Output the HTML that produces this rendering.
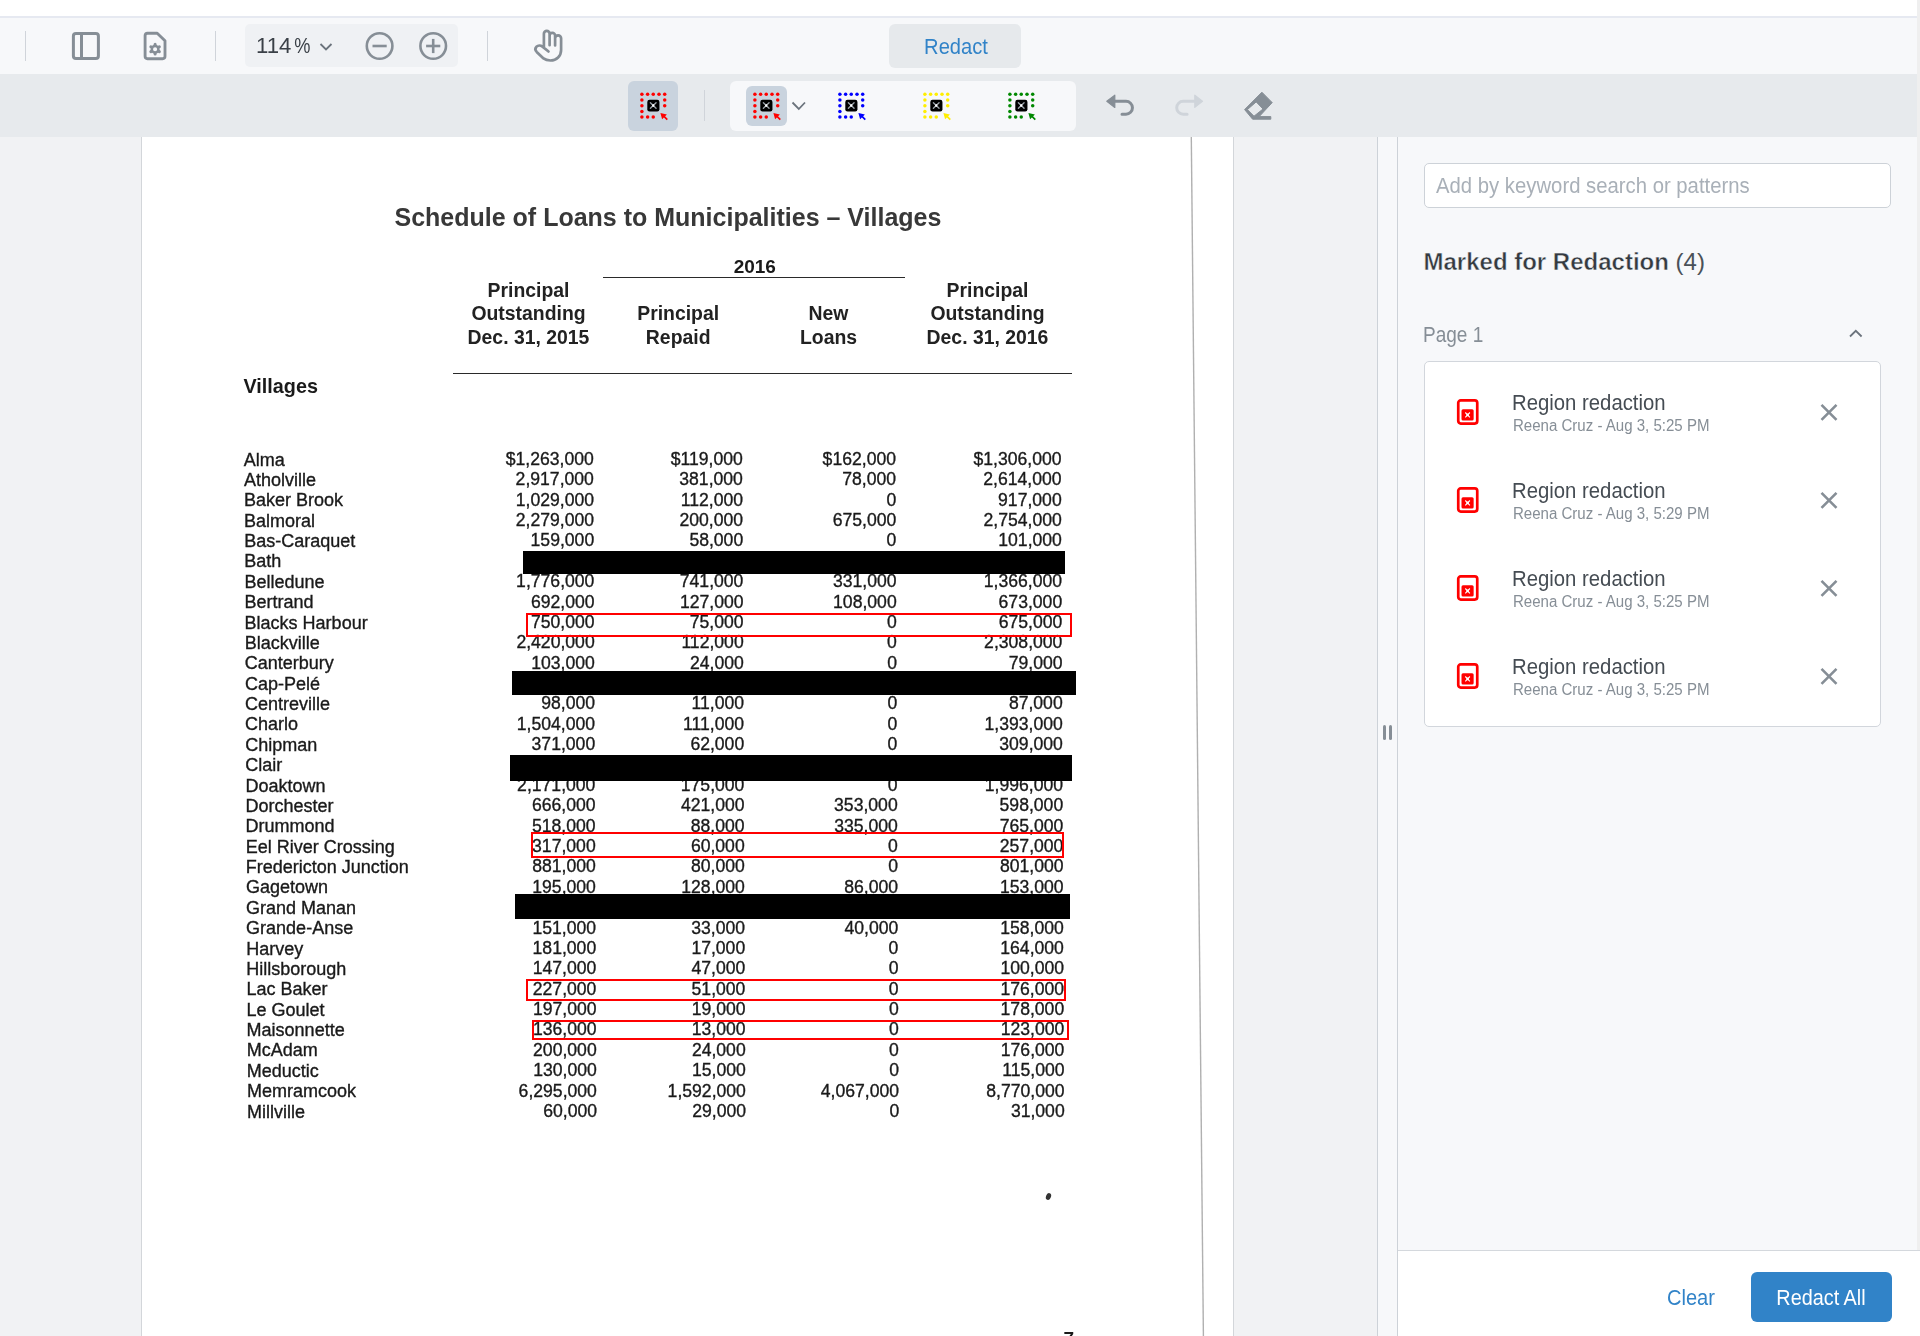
<!DOCTYPE html>
<html><head><meta charset="utf-8">
<style>
html,body{margin:0;padding:0;}
body{width:1920px;height:1336px;overflow:hidden;position:relative;background:#fff;font-family:"Liberation Sans",sans-serif;}
.abs{position:absolute;}
.t{position:absolute;white-space:pre;font-family:"Liberation Sans",sans-serif;color:#1a1a1a;}
.tr{-webkit-text-stroke:0.35px #1a1a1a;}
.ln{position:absolute;background:#2a2a2a;}
.bar{position:absolute;background:#000;}
.rr{position:absolute;box-sizing:border-box;border:2px solid #ff0000;}
#topline{left:0;top:16px;width:1917px;height:2px;background:#e6e9f1;}
#tb1{left:0;top:18px;width:1917px;height:56px;background:#f7f8fa;}
#tb2{left:0;top:74px;width:1917px;height:63px;background:#e7eaed;}
#scroll{left:1917px;top:0;width:3px;height:1336px;background:#efefef;}
#docbg{left:0;top:137px;width:1377px;height:1199px;background:#f1f2f4;}
#page{left:141px;top:137px;width:1093px;height:1199px;background:#fff;box-sizing:border-box;border-left:1px solid #d3d6da;border-right:1px solid #d3d6da;overflow:hidden;}
#split{left:1377px;top:137px;width:21px;height:1199px;background:#f7f8fa;box-sizing:border-box;border-left:1px solid #cdd2d8;border-right:1px solid #cdd2d8;}
#side{left:1398px;top:137px;width:1519px;height:1199px;background:#f7f8fa;}
.div{position:absolute;width:1px;background:#d0d4da;}
.st{position:absolute;white-space:pre;font-family:"Liberation Sans",sans-serif;}
</style></head><body>
<div class="abs" id="topline"></div>
<div class="abs" id="tb1"></div>
<div class="abs" id="tb2"></div>
<div class="abs" id="docbg"></div>
<div class="abs" id="page"></div>
<div class="abs" id="split"></div>
<div class="abs" id="side"></div>
<div class="abs" id="scroll"></div>

<!-- document content -->
<div class="abs" style="left:0;top:0;width:1920px;height:1336px;overflow:hidden;clip-path:inset(137px 686px 0 142px);filter:blur(0.35px);">
<div class="t" style="left:394.50px;top:204.54px;font-size:25px;line-height:25px;font-weight:700;color:#383838;">Schedule of Loans to Municipalities – Villages</div>
<div class="t" style="left:694.80px;width:120px;text-align:center;top:256.92px;font-size:19px;line-height:19px;font-weight:700;color:#1a1a1a;">2016</div>
<div class="t" style="left:428.50px;width:200px;text-align:center;top:281.08px;font-size:19.4px;line-height:19.4px;font-weight:700;color:#222;">Principal</div>
<div class="t" style="left:428.50px;width:200px;text-align:center;top:304.38px;font-size:19.4px;line-height:19.4px;font-weight:700;color:#222;">Outstanding</div>
<div class="t" style="left:428.50px;width:200px;text-align:center;top:328.08px;font-size:19.4px;line-height:19.4px;font-weight:700;color:#222;">Dec. 31, 2015</div>
<div class="t" style="left:578.20px;width:200px;text-align:center;top:304.38px;font-size:19.4px;line-height:19.4px;font-weight:700;color:#222;">Principal</div>
<div class="t" style="left:578.20px;width:200px;text-align:center;top:328.08px;font-size:19.4px;line-height:19.4px;font-weight:700;color:#222;">Repaid</div>
<div class="t" style="left:728.50px;width:200px;text-align:center;top:304.38px;font-size:19.4px;line-height:19.4px;font-weight:700;color:#222;">New</div>
<div class="t" style="left:728.50px;width:200px;text-align:center;top:328.08px;font-size:19.4px;line-height:19.4px;font-weight:700;color:#222;">Loans</div>
<div class="t" style="left:887.50px;width:200px;text-align:center;top:281.08px;font-size:19.4px;line-height:19.4px;font-weight:700;color:#222;">Principal</div>
<div class="t" style="left:887.50px;width:200px;text-align:center;top:304.38px;font-size:19.4px;line-height:19.4px;font-weight:700;color:#222;">Outstanding</div>
<div class="t" style="left:887.50px;width:200px;text-align:center;top:328.08px;font-size:19.4px;line-height:19.4px;font-weight:700;color:#222;">Dec. 31, 2016</div>
<div class="t" style="left:243.50px;top:376.74px;font-size:19.8px;line-height:19.8px;font-weight:700;color:#1a1a1a;">Villages</div>
<div class="ln" style="left:603px;top:276.5px;width:302px;height:1.6px"></div>
<div class="ln" style="left:452.5px;top:372.7px;width:619px;height:1.6px"></div>
<div class="t tr" style="left:243.80px;top:450.56px;font-size:18px;line-height:18px;">Alma</div>
<div class="t tr" style="left:453.80px;width:140px;text-align:right;top:450.90px;font-size:17.6px;line-height:17.6px;">$1,263,000</div>
<div class="t tr" style="left:602.80px;width:140px;text-align:right;top:450.90px;font-size:17.6px;line-height:17.6px;">$119,000</div>
<div class="t tr" style="left:756.00px;width:140px;text-align:right;top:450.90px;font-size:17.6px;line-height:17.6px;">$162,000</div>
<div class="t tr" style="left:921.50px;width:140px;text-align:right;top:450.90px;font-size:17.6px;line-height:17.6px;">$1,306,000</div>
<div class="t tr" style="left:243.90px;top:470.94px;font-size:18px;line-height:18px;">Atholville</div>
<div class="t tr" style="left:453.90px;width:140px;text-align:right;top:471.28px;font-size:17.6px;line-height:17.6px;">2,917,000</div>
<div class="t tr" style="left:602.90px;width:140px;text-align:right;top:471.28px;font-size:17.6px;line-height:17.6px;">381,000</div>
<div class="t tr" style="left:756.10px;width:140px;text-align:right;top:471.28px;font-size:17.6px;line-height:17.6px;">78,000</div>
<div class="t tr" style="left:921.60px;width:140px;text-align:right;top:471.28px;font-size:17.6px;line-height:17.6px;">2,614,000</div>
<div class="t tr" style="left:244.00px;top:491.31px;font-size:18px;line-height:18px;">Baker Brook</div>
<div class="t tr" style="left:454.00px;width:140px;text-align:right;top:491.65px;font-size:17.6px;line-height:17.6px;">1,029,000</div>
<div class="t tr" style="left:603.00px;width:140px;text-align:right;top:491.65px;font-size:17.6px;line-height:17.6px;">112,000</div>
<div class="t tr" style="left:756.20px;width:140px;text-align:right;top:491.65px;font-size:17.6px;line-height:17.6px;">0</div>
<div class="t tr" style="left:921.70px;width:140px;text-align:right;top:491.65px;font-size:17.6px;line-height:17.6px;">917,000</div>
<div class="t tr" style="left:244.10px;top:511.69px;font-size:18px;line-height:18px;">Balmoral</div>
<div class="t tr" style="left:454.10px;width:140px;text-align:right;top:512.03px;font-size:17.6px;line-height:17.6px;">2,279,000</div>
<div class="t tr" style="left:603.10px;width:140px;text-align:right;top:512.03px;font-size:17.6px;line-height:17.6px;">200,000</div>
<div class="t tr" style="left:756.30px;width:140px;text-align:right;top:512.03px;font-size:17.6px;line-height:17.6px;">675,000</div>
<div class="t tr" style="left:921.80px;width:140px;text-align:right;top:512.03px;font-size:17.6px;line-height:17.6px;">2,754,000</div>
<div class="t tr" style="left:244.20px;top:532.06px;font-size:18px;line-height:18px;">Bas-Caraquet</div>
<div class="t tr" style="left:454.20px;width:140px;text-align:right;top:532.40px;font-size:17.6px;line-height:17.6px;">159,000</div>
<div class="t tr" style="left:603.20px;width:140px;text-align:right;top:532.40px;font-size:17.6px;line-height:17.6px;">58,000</div>
<div class="t tr" style="left:756.40px;width:140px;text-align:right;top:532.40px;font-size:17.6px;line-height:17.6px;">0</div>
<div class="t tr" style="left:921.90px;width:140px;text-align:right;top:532.40px;font-size:17.6px;line-height:17.6px;">101,000</div>
<div class="t tr" style="left:244.30px;top:552.44px;font-size:18px;line-height:18px;">Bath</div>
<div class="t tr" style="left:244.40px;top:572.81px;font-size:18px;line-height:18px;">Belledune</div>
<div class="t tr" style="left:454.40px;width:140px;text-align:right;top:573.15px;font-size:17.6px;line-height:17.6px;">1,776,000</div>
<div class="t tr" style="left:603.40px;width:140px;text-align:right;top:573.15px;font-size:17.6px;line-height:17.6px;">741,000</div>
<div class="t tr" style="left:756.60px;width:140px;text-align:right;top:573.15px;font-size:17.6px;line-height:17.6px;">331,000</div>
<div class="t tr" style="left:922.10px;width:140px;text-align:right;top:573.15px;font-size:17.6px;line-height:17.6px;">1,366,000</div>
<div class="t tr" style="left:244.50px;top:593.19px;font-size:18px;line-height:18px;">Bertrand</div>
<div class="t tr" style="left:454.50px;width:140px;text-align:right;top:593.53px;font-size:17.6px;line-height:17.6px;">692,000</div>
<div class="t tr" style="left:603.50px;width:140px;text-align:right;top:593.53px;font-size:17.6px;line-height:17.6px;">127,000</div>
<div class="t tr" style="left:756.70px;width:140px;text-align:right;top:593.53px;font-size:17.6px;line-height:17.6px;">108,000</div>
<div class="t tr" style="left:922.20px;width:140px;text-align:right;top:593.53px;font-size:17.6px;line-height:17.6px;">673,000</div>
<div class="t tr" style="left:244.60px;top:613.56px;font-size:18px;line-height:18px;">Blacks Harbour</div>
<div class="t tr" style="left:454.60px;width:140px;text-align:right;top:613.90px;font-size:17.6px;line-height:17.6px;">750,000</div>
<div class="t tr" style="left:603.60px;width:140px;text-align:right;top:613.90px;font-size:17.6px;line-height:17.6px;">75,000</div>
<div class="t tr" style="left:756.80px;width:140px;text-align:right;top:613.90px;font-size:17.6px;line-height:17.6px;">0</div>
<div class="t tr" style="left:922.30px;width:140px;text-align:right;top:613.90px;font-size:17.6px;line-height:17.6px;">675,000</div>
<div class="t tr" style="left:244.70px;top:633.94px;font-size:18px;line-height:18px;">Blackville</div>
<div class="t tr" style="left:454.70px;width:140px;text-align:right;top:634.28px;font-size:17.6px;line-height:17.6px;">2,420,000</div>
<div class="t tr" style="left:603.70px;width:140px;text-align:right;top:634.28px;font-size:17.6px;line-height:17.6px;">112,000</div>
<div class="t tr" style="left:756.90px;width:140px;text-align:right;top:634.28px;font-size:17.6px;line-height:17.6px;">0</div>
<div class="t tr" style="left:922.40px;width:140px;text-align:right;top:634.28px;font-size:17.6px;line-height:17.6px;">2,308,000</div>
<div class="t tr" style="left:244.80px;top:654.31px;font-size:18px;line-height:18px;">Canterbury</div>
<div class="t tr" style="left:454.80px;width:140px;text-align:right;top:654.65px;font-size:17.6px;line-height:17.6px;">103,000</div>
<div class="t tr" style="left:603.80px;width:140px;text-align:right;top:654.65px;font-size:17.6px;line-height:17.6px;">24,000</div>
<div class="t tr" style="left:757.00px;width:140px;text-align:right;top:654.65px;font-size:17.6px;line-height:17.6px;">0</div>
<div class="t tr" style="left:922.50px;width:140px;text-align:right;top:654.65px;font-size:17.6px;line-height:17.6px;">79,000</div>
<div class="t tr" style="left:244.90px;top:674.69px;font-size:18px;line-height:18px;">Cap-Pelé</div>
<div class="t tr" style="left:245.00px;top:695.06px;font-size:18px;line-height:18px;">Centreville</div>
<div class="t tr" style="left:455.00px;width:140px;text-align:right;top:695.40px;font-size:17.6px;line-height:17.6px;">98,000</div>
<div class="t tr" style="left:604.00px;width:140px;text-align:right;top:695.40px;font-size:17.6px;line-height:17.6px;">11,000</div>
<div class="t tr" style="left:757.20px;width:140px;text-align:right;top:695.40px;font-size:17.6px;line-height:17.6px;">0</div>
<div class="t tr" style="left:922.70px;width:140px;text-align:right;top:695.40px;font-size:17.6px;line-height:17.6px;">87,000</div>
<div class="t tr" style="left:245.10px;top:715.44px;font-size:18px;line-height:18px;">Charlo</div>
<div class="t tr" style="left:455.10px;width:140px;text-align:right;top:715.78px;font-size:17.6px;line-height:17.6px;">1,504,000</div>
<div class="t tr" style="left:604.10px;width:140px;text-align:right;top:715.78px;font-size:17.6px;line-height:17.6px;">111,000</div>
<div class="t tr" style="left:757.30px;width:140px;text-align:right;top:715.78px;font-size:17.6px;line-height:17.6px;">0</div>
<div class="t tr" style="left:922.80px;width:140px;text-align:right;top:715.78px;font-size:17.6px;line-height:17.6px;">1,393,000</div>
<div class="t tr" style="left:245.20px;top:735.81px;font-size:18px;line-height:18px;">Chipman</div>
<div class="t tr" style="left:455.20px;width:140px;text-align:right;top:736.15px;font-size:17.6px;line-height:17.6px;">371,000</div>
<div class="t tr" style="left:604.20px;width:140px;text-align:right;top:736.15px;font-size:17.6px;line-height:17.6px;">62,000</div>
<div class="t tr" style="left:757.40px;width:140px;text-align:right;top:736.15px;font-size:17.6px;line-height:17.6px;">0</div>
<div class="t tr" style="left:922.90px;width:140px;text-align:right;top:736.15px;font-size:17.6px;line-height:17.6px;">309,000</div>
<div class="t tr" style="left:245.30px;top:756.19px;font-size:18px;line-height:18px;">Clair</div>
<div class="t tr" style="left:245.40px;top:776.56px;font-size:18px;line-height:18px;">Doaktown</div>
<div class="t tr" style="left:455.40px;width:140px;text-align:right;top:776.90px;font-size:17.6px;line-height:17.6px;">2,171,000</div>
<div class="t tr" style="left:604.40px;width:140px;text-align:right;top:776.90px;font-size:17.6px;line-height:17.6px;">175,000</div>
<div class="t tr" style="left:757.60px;width:140px;text-align:right;top:776.90px;font-size:17.6px;line-height:17.6px;">0</div>
<div class="t tr" style="left:923.10px;width:140px;text-align:right;top:776.90px;font-size:17.6px;line-height:17.6px;">1,996,000</div>
<div class="t tr" style="left:245.50px;top:796.94px;font-size:18px;line-height:18px;">Dorchester</div>
<div class="t tr" style="left:455.50px;width:140px;text-align:right;top:797.28px;font-size:17.6px;line-height:17.6px;">666,000</div>
<div class="t tr" style="left:604.50px;width:140px;text-align:right;top:797.28px;font-size:17.6px;line-height:17.6px;">421,000</div>
<div class="t tr" style="left:757.70px;width:140px;text-align:right;top:797.28px;font-size:17.6px;line-height:17.6px;">353,000</div>
<div class="t tr" style="left:923.20px;width:140px;text-align:right;top:797.28px;font-size:17.6px;line-height:17.6px;">598,000</div>
<div class="t tr" style="left:245.60px;top:817.31px;font-size:18px;line-height:18px;">Drummond</div>
<div class="t tr" style="left:455.60px;width:140px;text-align:right;top:817.65px;font-size:17.6px;line-height:17.6px;">518,000</div>
<div class="t tr" style="left:604.60px;width:140px;text-align:right;top:817.65px;font-size:17.6px;line-height:17.6px;">88,000</div>
<div class="t tr" style="left:757.80px;width:140px;text-align:right;top:817.65px;font-size:17.6px;line-height:17.6px;">335,000</div>
<div class="t tr" style="left:923.30px;width:140px;text-align:right;top:817.65px;font-size:17.6px;line-height:17.6px;">765,000</div>
<div class="t tr" style="left:245.70px;top:837.69px;font-size:18px;line-height:18px;">Eel River Crossing</div>
<div class="t tr" style="left:455.70px;width:140px;text-align:right;top:838.03px;font-size:17.6px;line-height:17.6px;">317,000</div>
<div class="t tr" style="left:604.70px;width:140px;text-align:right;top:838.03px;font-size:17.6px;line-height:17.6px;">60,000</div>
<div class="t tr" style="left:757.90px;width:140px;text-align:right;top:838.03px;font-size:17.6px;line-height:17.6px;">0</div>
<div class="t tr" style="left:923.40px;width:140px;text-align:right;top:838.03px;font-size:17.6px;line-height:17.6px;">257,000</div>
<div class="t tr" style="left:245.80px;top:858.06px;font-size:18px;line-height:18px;">Fredericton Junction</div>
<div class="t tr" style="left:455.80px;width:140px;text-align:right;top:858.40px;font-size:17.6px;line-height:17.6px;">881,000</div>
<div class="t tr" style="left:604.80px;width:140px;text-align:right;top:858.40px;font-size:17.6px;line-height:17.6px;">80,000</div>
<div class="t tr" style="left:758.00px;width:140px;text-align:right;top:858.40px;font-size:17.6px;line-height:17.6px;">0</div>
<div class="t tr" style="left:923.50px;width:140px;text-align:right;top:858.40px;font-size:17.6px;line-height:17.6px;">801,000</div>
<div class="t tr" style="left:245.90px;top:878.44px;font-size:18px;line-height:18px;">Gagetown</div>
<div class="t tr" style="left:455.90px;width:140px;text-align:right;top:878.78px;font-size:17.6px;line-height:17.6px;">195,000</div>
<div class="t tr" style="left:604.90px;width:140px;text-align:right;top:878.78px;font-size:17.6px;line-height:17.6px;">128,000</div>
<div class="t tr" style="left:758.10px;width:140px;text-align:right;top:878.78px;font-size:17.6px;line-height:17.6px;">86,000</div>
<div class="t tr" style="left:923.60px;width:140px;text-align:right;top:878.78px;font-size:17.6px;line-height:17.6px;">153,000</div>
<div class="t tr" style="left:246.00px;top:898.81px;font-size:18px;line-height:18px;">Grand Manan</div>
<div class="t tr" style="left:246.10px;top:919.19px;font-size:18px;line-height:18px;">Grande-Anse</div>
<div class="t tr" style="left:456.10px;width:140px;text-align:right;top:919.53px;font-size:17.6px;line-height:17.6px;">151,000</div>
<div class="t tr" style="left:605.10px;width:140px;text-align:right;top:919.53px;font-size:17.6px;line-height:17.6px;">33,000</div>
<div class="t tr" style="left:758.30px;width:140px;text-align:right;top:919.53px;font-size:17.6px;line-height:17.6px;">40,000</div>
<div class="t tr" style="left:923.80px;width:140px;text-align:right;top:919.53px;font-size:17.6px;line-height:17.6px;">158,000</div>
<div class="t tr" style="left:246.20px;top:939.56px;font-size:18px;line-height:18px;">Harvey</div>
<div class="t tr" style="left:456.20px;width:140px;text-align:right;top:939.90px;font-size:17.6px;line-height:17.6px;">181,000</div>
<div class="t tr" style="left:605.20px;width:140px;text-align:right;top:939.90px;font-size:17.6px;line-height:17.6px;">17,000</div>
<div class="t tr" style="left:758.40px;width:140px;text-align:right;top:939.90px;font-size:17.6px;line-height:17.6px;">0</div>
<div class="t tr" style="left:923.90px;width:140px;text-align:right;top:939.90px;font-size:17.6px;line-height:17.6px;">164,000</div>
<div class="t tr" style="left:246.30px;top:959.94px;font-size:18px;line-height:18px;">Hillsborough</div>
<div class="t tr" style="left:456.30px;width:140px;text-align:right;top:960.28px;font-size:17.6px;line-height:17.6px;">147,000</div>
<div class="t tr" style="left:605.30px;width:140px;text-align:right;top:960.28px;font-size:17.6px;line-height:17.6px;">47,000</div>
<div class="t tr" style="left:758.50px;width:140px;text-align:right;top:960.28px;font-size:17.6px;line-height:17.6px;">0</div>
<div class="t tr" style="left:924.00px;width:140px;text-align:right;top:960.28px;font-size:17.6px;line-height:17.6px;">100,000</div>
<div class="t tr" style="left:246.40px;top:980.31px;font-size:18px;line-height:18px;">Lac Baker</div>
<div class="t tr" style="left:456.40px;width:140px;text-align:right;top:980.65px;font-size:17.6px;line-height:17.6px;">227,000</div>
<div class="t tr" style="left:605.40px;width:140px;text-align:right;top:980.65px;font-size:17.6px;line-height:17.6px;">51,000</div>
<div class="t tr" style="left:758.60px;width:140px;text-align:right;top:980.65px;font-size:17.6px;line-height:17.6px;">0</div>
<div class="t tr" style="left:924.10px;width:140px;text-align:right;top:980.65px;font-size:17.6px;line-height:17.6px;">176,000</div>
<div class="t tr" style="left:246.50px;top:1000.69px;font-size:18px;line-height:18px;">Le Goulet</div>
<div class="t tr" style="left:456.50px;width:140px;text-align:right;top:1001.03px;font-size:17.6px;line-height:17.6px;">197,000</div>
<div class="t tr" style="left:605.50px;width:140px;text-align:right;top:1001.03px;font-size:17.6px;line-height:17.6px;">19,000</div>
<div class="t tr" style="left:758.70px;width:140px;text-align:right;top:1001.03px;font-size:17.6px;line-height:17.6px;">0</div>
<div class="t tr" style="left:924.20px;width:140px;text-align:right;top:1001.03px;font-size:17.6px;line-height:17.6px;">178,000</div>
<div class="t tr" style="left:246.60px;top:1021.06px;font-size:18px;line-height:18px;">Maisonnette</div>
<div class="t tr" style="left:456.60px;width:140px;text-align:right;top:1021.40px;font-size:17.6px;line-height:17.6px;">136,000</div>
<div class="t tr" style="left:605.60px;width:140px;text-align:right;top:1021.40px;font-size:17.6px;line-height:17.6px;">13,000</div>
<div class="t tr" style="left:758.80px;width:140px;text-align:right;top:1021.40px;font-size:17.6px;line-height:17.6px;">0</div>
<div class="t tr" style="left:924.30px;width:140px;text-align:right;top:1021.40px;font-size:17.6px;line-height:17.6px;">123,000</div>
<div class="t tr" style="left:246.70px;top:1041.44px;font-size:18px;line-height:18px;">McAdam</div>
<div class="t tr" style="left:456.70px;width:140px;text-align:right;top:1041.78px;font-size:17.6px;line-height:17.6px;">200,000</div>
<div class="t tr" style="left:605.70px;width:140px;text-align:right;top:1041.78px;font-size:17.6px;line-height:17.6px;">24,000</div>
<div class="t tr" style="left:758.90px;width:140px;text-align:right;top:1041.78px;font-size:17.6px;line-height:17.6px;">0</div>
<div class="t tr" style="left:924.40px;width:140px;text-align:right;top:1041.78px;font-size:17.6px;line-height:17.6px;">176,000</div>
<div class="t tr" style="left:246.80px;top:1061.81px;font-size:18px;line-height:18px;">Meductic</div>
<div class="t tr" style="left:456.80px;width:140px;text-align:right;top:1062.15px;font-size:17.6px;line-height:17.6px;">130,000</div>
<div class="t tr" style="left:605.80px;width:140px;text-align:right;top:1062.15px;font-size:17.6px;line-height:17.6px;">15,000</div>
<div class="t tr" style="left:759.00px;width:140px;text-align:right;top:1062.15px;font-size:17.6px;line-height:17.6px;">0</div>
<div class="t tr" style="left:924.50px;width:140px;text-align:right;top:1062.15px;font-size:17.6px;line-height:17.6px;">115,000</div>
<div class="t tr" style="left:246.90px;top:1082.19px;font-size:18px;line-height:18px;">Memramcook</div>
<div class="t tr" style="left:456.90px;width:140px;text-align:right;top:1082.53px;font-size:17.6px;line-height:17.6px;">6,295,000</div>
<div class="t tr" style="left:605.90px;width:140px;text-align:right;top:1082.53px;font-size:17.6px;line-height:17.6px;">1,592,000</div>
<div class="t tr" style="left:759.10px;width:140px;text-align:right;top:1082.53px;font-size:17.6px;line-height:17.6px;">4,067,000</div>
<div class="t tr" style="left:924.60px;width:140px;text-align:right;top:1082.53px;font-size:17.6px;line-height:17.6px;">8,770,000</div>
<div class="t tr" style="left:247.00px;top:1102.56px;font-size:18px;line-height:18px;">Millville</div>
<div class="t tr" style="left:457.00px;width:140px;text-align:right;top:1102.90px;font-size:17.6px;line-height:17.6px;">60,000</div>
<div class="t tr" style="left:606.00px;width:140px;text-align:right;top:1102.90px;font-size:17.6px;line-height:17.6px;">29,000</div>
<div class="t tr" style="left:759.20px;width:140px;text-align:right;top:1102.90px;font-size:17.6px;line-height:17.6px;">0</div>
<div class="t tr" style="left:924.70px;width:140px;text-align:right;top:1102.90px;font-size:17.6px;line-height:17.6px;">31,000</div>
<div class="bar" style="left:523px;top:550.6px;width:542px;height:23.100000000000023px"></div>
<div class="bar" style="left:512px;top:671px;width:564px;height:23.5px"></div>
<div class="bar" style="left:510px;top:755px;width:562px;height:26px"></div>
<div class="bar" style="left:515px;top:894px;width:555px;height:25px"></div>
<div class="rr" style="left:526px;top:612.7px;width:545.5999999999999px;height:24.299999999999955px"></div>
<div class="rr" style="left:531px;top:832px;width:533px;height:25.5px"></div>
<div class="rr" style="left:526px;top:979px;width:539.5px;height:21.5px"></div>
<div class="rr" style="left:532px;top:1020px;width:536.5px;height:20px"></div>
<div style="position:absolute;left:1045.5px;top:1193px;width:5px;height:7px;border-radius:50%;background:#333;transform:rotate(20deg)"></div>
<div class="t" style="left:1063.50px;top:1328.92px;font-size:19px;line-height:19px;font-weight:700;color:#1a1a1a;">7</div>
<svg style="position:absolute;left:0;top:0" width="1920" height="1336"><line x1="1191.3" y1="137" x2="1203.4" y2="1336" stroke="#b0b0b0" stroke-width="1.4"/></svg>
</div>

<!-- toolbar 1 -->
<div class="div" style="left:25px;top:31px;height:30px;"></div>
<svg class="abs" style="left:70px;top:30px" width="32" height="32" viewBox="0 0 32 32">
  <rect x="3.4" y="3.5" width="25" height="25" rx="2.6" fill="none" stroke="#868e96" stroke-width="3"/>
  <line x1="11.5" y1="3.5" x2="11.5" y2="28.5" stroke="#868e96" stroke-width="3"/>
</svg>
<svg class="abs" style="left:140px;top:30px" width="32" height="32" viewBox="0 0 32 32">
  <path d="M7.5 3.2 Q5.1 3.2 5.1 5.6 V26.3 Q5.1 28.7 7.5 28.7 H22.6 Q25 28.7 25 26.3 V10.8 L17.2 3.2 Z" fill="none" stroke="#868e96" stroke-width="2.85" stroke-linejoin="round"/>
  <g transform="translate(15.1,19.2)" stroke="#868e96" stroke-linecap="round">
    <circle r="3.3" fill="none" stroke-width="2.5"/>
    <g stroke-width="3">
      <line x1="0" y1="-4.3" x2="0" y2="-4.9"/><line x1="0" y1="4.3" x2="0" y2="4.9"/>
      <line x1="3.72" y1="-2.15" x2="4.24" y2="-2.45"/><line x1="-3.72" y1="-2.15" x2="-4.24" y2="-2.45"/>
      <line x1="3.72" y1="2.15" x2="4.24" y2="2.45"/><line x1="-3.72" y1="2.15" x2="-4.24" y2="2.45"/>
    </g>
  </g>
</svg>
<div class="div" style="left:215px;top:31px;height:30px;"></div>
<div class="abs" style="left:245px;top:24px;width:213px;height:43px;background:#eff1f4;border-radius:5px;"></div>
<svg class="abs" style="left:316px;top:38px" width="20" height="16" viewBox="0 0 20 16">
  <polyline points="4.5,6 10,11.5 15.5,6" fill="none" stroke="#6b737c" stroke-width="1.8"/>
</svg>
<svg class="abs" style="left:362px;top:29px" width="35" height="35" viewBox="0 0 35 35">
  <circle cx="17.6" cy="17" r="12.8" fill="none" stroke="#868e96" stroke-width="2.6"/>
  <line x1="10.5" y1="17" x2="24.7" y2="17" stroke="#868e96" stroke-width="2.6"/>
</svg>
<svg class="abs" style="left:416px;top:29px" width="35" height="35" viewBox="0 0 35 35">
  <circle cx="17.2" cy="17" r="12.8" fill="none" stroke="#868e96" stroke-width="2.6"/>
  <line x1="10.1" y1="17" x2="24.3" y2="17" stroke="#868e96" stroke-width="2.6"/>
  <line x1="17.2" y1="9.9" x2="17.2" y2="24.1" stroke="#868e96" stroke-width="2.6"/>
</svg>
<div class="div" style="left:487px;top:31px;height:30px;"></div>
<svg class="abs" style="left:530px;top:28px" width="36" height="36" viewBox="0 0 36 36">
  <path d="M18.5 23.5 L12.5 18.6 C10.6 17.1 8 17.1 6.5 18.7 C5.1 20.2 5.2 22.4 6.7 23.9 L13.5 30.4 C15.5 32 17.6 32.5 20.5 32.5 C26.6 32.5 31.1 28 31.1 22 V10.3 A3 3 0 0 0 25.1 10.3 V17.4 M25.1 17.4 V7.6 A2.75 2.75 0 0 0 19.6 7.6 V17.2 M19.6 17.2 V5.7 A2.85 2.85 0 0 0 13.9 5.7 V19.5" fill="none" stroke="#868e96" stroke-width="2.7" stroke-linecap="round" stroke-linejoin="round"/>
</svg>
<div class="abs" style="left:889px;top:24px;width:132px;height:44px;background:#e6e9ec;border-radius:6px;"></div>

<!-- toolbar 2 -->
<svg width="0" height="0" style="position:absolute">
  <defs>
    <g id="rdots">
      <circle cx="1.9" cy="2.3" r="1.75"/><circle cx="7.6" cy="2.3" r="1.75"/><circle cx="13.25" cy="2.3" r="1.75"/><circle cx="19" cy="2.3" r="1.75"/><circle cx="24.7" cy="2.3" r="1.75"/>
      <circle cx="1.9" cy="8" r="1.75"/><circle cx="1.9" cy="13.65" r="1.75"/><circle cx="1.9" cy="19.45" r="1.75"/><circle cx="1.9" cy="25.1" r="1.75"/>
      <circle cx="24.7" cy="8" r="1.75"/><circle cx="24.7" cy="13.65" r="1.75"/>
      <circle cx="7.6" cy="25.1" r="1.75"/><circle cx="13.25" cy="25.1" r="1.75"/>
      <path d="M20.4 20.9 L26.9 22.4 L25.1 24.2 L27.9 27 L26.7 28.2 L23.9 25.4 L22.1 27.2 Z"/>
    </g>
    <g id="rbox">
      <rect x="7.3" y="7.7" width="12.15" height="11.75" rx="2.2" fill="#000"/>
      <path d="M10.4 10.8 L16.05 16.35 M16.05 10.8 L10.4 16.35" stroke="#9aa1a8" stroke-width="1.4" stroke-linecap="round"/>
      <circle cx="13.22" cy="13.57" r="1.2" fill="#fff"/>
    </g>
  </defs>
</svg>
<div class="abs" style="left:628px;top:81px;width:50px;height:50px;background:#c9d3de;border-radius:6px;"></div>
<svg class="abs" style="left:640px;top:92px" width="30" height="30" viewBox="0 0 30 30"><use href="#rdots" fill="#f00"/><use href="#rbox"/></svg>
<div class="div" style="left:704px;top:90px;height:31px;"></div>
<div class="abs" style="left:730px;top:80.5px;width:346px;height:50.5px;background:#f7f8fa;border-radius:6px;"></div>
<div class="abs" style="left:746px;top:85.5px;width:40.5px;height:40.5px;background:#c9d3de;border-radius:6px;"></div>
<svg class="abs" style="left:753px;top:92px" width="30" height="30" viewBox="0 0 30 30"><use href="#rdots" fill="#f00"/><use href="#rbox"/></svg>
<svg class="abs" style="left:789px;top:98px" width="20" height="16" viewBox="0 0 20 16">
  <polyline points="3.5,4.5 9.8,11 16,4.5" fill="none" stroke="#6b737c" stroke-width="1.8"/>
</svg>
<svg class="abs" style="left:838px;top:92px" width="30" height="30" viewBox="0 0 30 30"><use href="#rdots" fill="#0000ff"/><use href="#rbox"/></svg>
<svg class="abs" style="left:922.5px;top:92px" width="30" height="30" viewBox="0 0 30 30"><use href="#rdots" fill="#ffee00"/><use href="#rbox"/></svg>
<svg class="abs" style="left:1008px;top:92px" width="30" height="30" viewBox="0 0 30 30"><use href="#rdots" fill="#008800"/><use href="#rbox"/></svg>
<svg class="abs" style="left:1103px;top:90px" width="36" height="32" viewBox="0 0 36 32">
  <path d="M10.5 11.3 H23 A6.45 6.45 0 0 1 23 24.2 H19" fill="none" stroke="#868e96" stroke-width="3" stroke-linecap="round"/>
  <path d="M3.8 11.3 L11.8 5.2 L11.8 17.4 Z" fill="#868e96" stroke="#868e96" stroke-width="1.2" stroke-linejoin="round"/>
</svg>
<svg class="abs" style="left:1171px;top:90px" width="36" height="32" viewBox="0 0 36 32">
  <path d="M24.5 11.3 H12.15 A6.45 6.45 0 0 0 12.15 24.2 H16.1" fill="none" stroke="#cfd4da" stroke-width="3" stroke-linecap="round"/>
  <path d="M31.5 11.3 L23.8 5.2 L23.8 17.4 Z" fill="#cfd4da" stroke="#cfd4da" stroke-width="1.2" stroke-linejoin="round"/>
</svg>
<svg class="abs" style="left:1240px;top:88px" width="36" height="36" viewBox="0 0 36 36">
  <path d="M4.6 21.6 L21.9 4.2 L32.2 14.6 L19.2 28.6 H30.8 V31.2 H12.6 Z M7.4 21.6 L16.2 13.9 L23 21 L14 28.2 Z" fill="#868e96" fill-rule="evenodd" stroke="#868e96" stroke-width="1" stroke-linejoin="round"/>
</svg>

<!-- splitter grip -->
<div class="abs" style="left:1383px;top:724.8px;width:3px;height:15.5px;background:#868e96;border-radius:1.5px;"></div>
<div class="abs" style="left:1389px;top:724.8px;width:3px;height:15.5px;background:#868e96;border-radius:1.5px;"></div>

<!-- sidebar -->
<div class="abs" style="left:1424px;top:163px;width:467px;height:45px;background:#fff;border:1px solid #cdd2d8;border-radius:5px;box-sizing:border-box;"></div>
<svg class="abs" style="left:1846px;top:326px" width="20" height="16" viewBox="0 0 20 16">
  <polyline points="4,10.5 9.8,4.8 15.6,10.5" fill="none" stroke="#6b737c" stroke-width="1.8"/>
</svg>
<div class="abs" style="left:1424px;top:361px;width:457px;height:366px;background:#fff;border:1px solid #d2d6dc;border-radius:5px;box-sizing:border-box;"></div>
<svg class="abs" style="left:1456px;top:398px" width="26" height="30" viewBox="0 0 26 30"><rect x="2.25" y="2.35" width="19" height="23.2" rx="2.5" fill="none" stroke="#f00" stroke-width="2.7"/><rect x="5.5" y="11.2" width="12.15" height="11.4" rx="1.5" fill="#f00"/><path d="M9.3 14.5 L13.9 19.3 M13.9 14.5 L9.3 19.3" stroke="#fff" stroke-width="1.1"/><circle cx="11.6" cy="16.9" r="1.3" fill="#fff"/></svg>
<div class="st" style="left:1511.50px;transform:scaleX(0.945);transform-origin:0 50%;top:392.60px;font-size:21.5px;line-height:21.5px;color:#454c53;">Region redaction</div>
<div class="st" style="left:1513.00px;transform:scaleX(0.94);transform-origin:0 50%;top:417.76px;font-size:16px;line-height:16px;color:#868e96;">Reena Cruz - Aug 3, 5:25 PM</div>
<svg class="abs" style="left:1817px;top:400px" width="24" height="24" viewBox="0 0 24 24"><path d="M4.5 4.8 L19.5 19.8 M19.5 4.8 L4.5 19.8" stroke="#868e96" stroke-width="2.6"/></svg>
<svg class="abs" style="left:1456px;top:486px" width="26" height="30" viewBox="0 0 26 30"><rect x="2.25" y="2.35" width="19" height="23.2" rx="2.5" fill="none" stroke="#f00" stroke-width="2.7"/><rect x="5.5" y="11.2" width="12.15" height="11.4" rx="1.5" fill="#f00"/><path d="M9.3 14.5 L13.9 19.3 M13.9 14.5 L9.3 19.3" stroke="#fff" stroke-width="1.1"/><circle cx="11.6" cy="16.9" r="1.3" fill="#fff"/></svg>
<div class="st" style="left:1511.50px;transform:scaleX(0.945);transform-origin:0 50%;top:480.60px;font-size:21.5px;line-height:21.5px;color:#454c53;">Region redaction</div>
<div class="st" style="left:1513.00px;transform:scaleX(0.94);transform-origin:0 50%;top:505.76px;font-size:16px;line-height:16px;color:#868e96;">Reena Cruz - Aug 3, 5:29 PM</div>
<svg class="abs" style="left:1817px;top:488px" width="24" height="24" viewBox="0 0 24 24"><path d="M4.5 4.8 L19.5 19.8 M19.5 4.8 L4.5 19.8" stroke="#868e96" stroke-width="2.6"/></svg>
<svg class="abs" style="left:1456px;top:574px" width="26" height="30" viewBox="0 0 26 30"><rect x="2.25" y="2.35" width="19" height="23.2" rx="2.5" fill="none" stroke="#f00" stroke-width="2.7"/><rect x="5.5" y="11.2" width="12.15" height="11.4" rx="1.5" fill="#f00"/><path d="M9.3 14.5 L13.9 19.3 M13.9 14.5 L9.3 19.3" stroke="#fff" stroke-width="1.1"/><circle cx="11.6" cy="16.9" r="1.3" fill="#fff"/></svg>
<div class="st" style="left:1511.50px;transform:scaleX(0.945);transform-origin:0 50%;top:568.60px;font-size:21.5px;line-height:21.5px;color:#454c53;">Region redaction</div>
<div class="st" style="left:1513.00px;transform:scaleX(0.94);transform-origin:0 50%;top:593.76px;font-size:16px;line-height:16px;color:#868e96;">Reena Cruz - Aug 3, 5:25 PM</div>
<svg class="abs" style="left:1817px;top:576px" width="24" height="24" viewBox="0 0 24 24"><path d="M4.5 4.8 L19.5 19.8 M19.5 4.8 L4.5 19.8" stroke="#868e96" stroke-width="2.6"/></svg>
<svg class="abs" style="left:1456px;top:662px" width="26" height="30" viewBox="0 0 26 30"><rect x="2.25" y="2.35" width="19" height="23.2" rx="2.5" fill="none" stroke="#f00" stroke-width="2.7"/><rect x="5.5" y="11.2" width="12.15" height="11.4" rx="1.5" fill="#f00"/><path d="M9.3 14.5 L13.9 19.3 M13.9 14.5 L9.3 19.3" stroke="#fff" stroke-width="1.1"/><circle cx="11.6" cy="16.9" r="1.3" fill="#fff"/></svg>
<div class="st" style="left:1511.50px;transform:scaleX(0.945);transform-origin:0 50%;top:656.60px;font-size:21.5px;line-height:21.5px;color:#454c53;">Region redaction</div>
<div class="st" style="left:1513.00px;transform:scaleX(0.94);transform-origin:0 50%;top:681.76px;font-size:16px;line-height:16px;color:#868e96;">Reena Cruz - Aug 3, 5:25 PM</div>
<svg class="abs" style="left:1817px;top:664px" width="24" height="24" viewBox="0 0 24 24"><path d="M4.5 4.8 L19.5 19.8 M19.5 4.8 L4.5 19.8" stroke="#868e96" stroke-width="2.6"/></svg>

<!-- footer -->
<div class="abs" style="left:1398px;top:1250px;width:1519px;height:86px;background:#fff;border-top:1px solid #d4d8dd;box-sizing:border-box;"></div>
<div class="abs" style="left:1750.5px;top:1272px;width:141.5px;height:50px;background:#3183c8;border-radius:6px;"></div>
<div class="st" style="left:255.80px;transform:scaleX(0.98);transform-origin:0 50%;top:35.27px;font-size:22.6px;line-height:22.6px;color:#3a4047;">114<span style="margin-left:3px;display:inline-block;transform:scaleX(0.82);transform-origin:0 0">%</span></div>
<div class="st" style="left:756.00px;width:400px;text-align:center;transform:scaleX(0.915);transform-origin:50% 50%;top:35.98px;font-size:22px;line-height:22px;color:#3183c8;">Redact</div>
<div class="st" style="left:1435.50px;transform:scaleX(0.936);transform-origin:0 50%;top:175.43px;font-size:21.7px;line-height:21.7px;color:#a9b0b8;">Add by keyword search or patterns</div>
<div class="st" style="left:1423.50px;transform:scaleX(1.0);transform-origin:0 50%;top:250.48px;font-size:24px;line-height:24px;color:#343a40;font-weight:700;"><span style="-webkit-text-stroke:0.45px #f7f8fa">Marked for Redaction</span> <span style="font-weight:400;color:#4a5158">(4)</span></div>
<div class="st" style="left:1423.00px;transform:scaleX(0.885);transform-origin:0 50%;top:324.80px;font-size:21.5px;line-height:21.5px;color:#868e96;">Page 1</div>
<div class="st" style="left:1666.50px;transform:scaleX(0.925);transform-origin:0 50%;top:1286.63px;font-size:21.7px;line-height:21.7px;color:#3183c8;">Clear</div>
<div class="st" style="left:1621.20px;width:400px;text-align:center;transform:scaleX(0.915);transform-origin:50% 50%;top:1286.63px;font-size:21.7px;line-height:21.7px;color:#ffffff;">Redact All</div>
</body></html>
